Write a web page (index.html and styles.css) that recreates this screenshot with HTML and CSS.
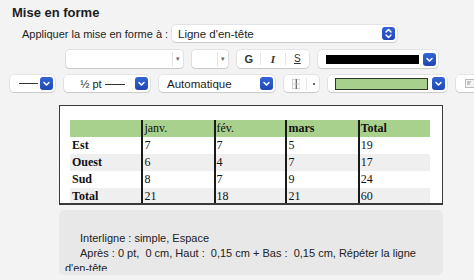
FILE: index.html
```html
<!DOCTYPE html>
<html lang="fr">
<head>
    <meta charset="UTF-8" />
    <title>Mise en forme</title>
    <link rel="stylesheet" href="styles.css">
</head>
<body>
    <div class="panel">
        <h2 class="title">Mise en forme</h2>

        <div class="row row-apply">
            <span class="label">Appliquer la mise en forme à :</span>
            <div class="popup popup-apply">
                <span class="popup-text">Ligne d'en-tête</span>
                <span class="blue-btn">
                    <svg width="9" height="11" viewBox="0 0 9 11"><path d="M2 4 L4.5 1.5 L7 4 M2 7 L4.5 9.5 L7 7" fill="none" stroke="#fff" stroke-width="1.5" stroke-linecap="round" stroke-linejoin="round"/></svg>
                </span>
            </div>
        </div>

        <div class="row row-font">
            <div class="combo combo-font"><span class="combo-arrow">▾</span></div>
            <div class="combo combo-size"><span class="combo-arrow">▾</span></div>
            <div class="segmented">
                <span class="seg seg-bold">G</span>
                <span class="seg seg-italic">I</span>
                <span class="seg seg-under">S</span>
            </div>
            <div class="popup popup-color">
                <span class="swatch swatch-black"></span>
                <span class="blue-btn"><svg width="9" height="9" viewBox="0 0 9 9"><path d="M2 3.5 L4.5 6 L7 3.5" fill="none" stroke="#fff" stroke-width="1.5" stroke-linecap="round" stroke-linejoin="round"/></svg></span>
            </div>
        </div>

        <div class="row row-border">
            <div class="popup popup-line">
                <span class="line-sample"></span>
                <span class="blue-btn"><svg width="9" height="9" viewBox="0 0 9 9"><path d="M2 3.5 L4.5 6 L7 3.5" fill="none" stroke="#fff" stroke-width="1.5" stroke-linecap="round" stroke-linejoin="round"/></svg></span>
            </div>
            <div class="popup popup-weight">
                <span class="popup-text centered">½ pt <span class="line-sample short"></span></span>
                <span class="blue-btn"><svg width="9" height="9" viewBox="0 0 9 9"><path d="M2 3.5 L4.5 6 L7 3.5" fill="none" stroke="#fff" stroke-width="1.5" stroke-linecap="round" stroke-linejoin="round"/></svg></span>
            </div>
            <div class="popup popup-auto">
                <span class="popup-text">Automatique</span>
                <span class="blue-btn"><svg width="9" height="9" viewBox="0 0 9 9"><path d="M2 3.5 L4.5 6 L7 3.5" fill="none" stroke="#fff" stroke-width="1.5" stroke-linecap="round" stroke-linejoin="round"/></svg></span>
            </div>
            <div class="popup popup-edges">
                <svg width="10" height="12" viewBox="0 0 10 12"><rect x="0.5" y="0.5" width="9" height="11" fill="none" stroke="#c8c8c8"/><line x1="5" y1="0.5" x2="5" y2="11.5" stroke="#333" stroke-width="1.2"/><line x1="0.5" y1="6" x2="9.5" y2="6" stroke="#c8c8c8"/></svg>
                <span class="edge-sep"></span>
                <span class="dot"></span>
            </div>
            <div class="popup popup-fill">
                <span class="swatch swatch-green"></span>
                <span class="blue-btn"><svg width="9" height="9" viewBox="0 0 9 9"><path d="M2 3.5 L4.5 6 L7 3.5" fill="none" stroke="#fff" stroke-width="1.5" stroke-linecap="round" stroke-linejoin="round"/></svg></span>
            </div>
            <div class="popup popup-align">
                <svg width="11" height="9" viewBox="0 0 11 9"><rect x="0.5" y="0.5" width="10" height="8" fill="#f4f4f4" stroke="#bbb"/><line x1="2" y1="3" x2="6" y2="3" stroke="#999"/><line x1="2" y1="5" x2="5" y2="5" stroke="#999"/></svg>
            </div>
        </div>

        <div class="preview">
            <table class="sample">
                <tr class="head">
                    <td></td><td>janv.</td><td>fév.</td><td class="strong">mars</td><td class="strong">Total</td>
                </tr>
                <tr>
                    <td class="strong">Est</td><td>7</td><td>7</td><td>5</td><td>19</td>
                </tr>
                <tr class="shade">
                    <td class="strong">Ouest</td><td>6</td><td>4</td><td>7</td><td>17</td>
                </tr>
                <tr>
                    <td class="strong">Sud</td><td>8</td><td>7</td><td>9</td><td>24</td>
                </tr>
                <tr class="shade">
                    <td class="strong">Total</td><td>21</td><td>18</td><td>21</td><td>60</td>
                </tr>
            </table>
        </div>

        <div class="summary">
            <div class="summary-text">
                <div class="summary-line">Interligne : simple, Espace</div>
                <div class="summary-line">Après : 0 pt,&nbsp; 0 cm, Haut :&nbsp; 0,15 cm + Bas :&nbsp; 0,15 cm, Répéter la ligne d'en-tête</div>
            </div>
        </div>
    </div>
</body>
</html>
```

FILE: styles.css
```css
body {
    margin: 0;
    background: #f3f3f3;
    font-family: "Liberation Sans", Arial, sans-serif;
    color: #1d1d1d;
    overflow: hidden;
}
.panel {
    width: 474px;
    height: 280px;
    overflow: hidden;
}
.title {
    margin: 0;
    padding: 6px 0 0 12px;
    font-size: 13px;
    font-weight: bold;
    line-height: 13px;
}
.row {
    display: flex;
    align-items: center;
    gap: 9px;
    white-space: nowrap;
}
.row-apply {
    margin: 6px 0 0 22px;
    gap: 0;
}
.label {
    font-size: 11px;
    width: 150px;
}
.popup {
    display: flex;
    align-items: center;
    box-sizing: border-box;
    height: 17px;
    background: #fff;
    border-radius: 4px;
    box-shadow: 0 0 0 0.5px rgba(0,0,0,0.12), 0 1px 1px rgba(0,0,0,0.12);
    padding: 0 2px 0 6px;
    font-size: 11px;
    flex-shrink: 0;
}
.popup-text {
    flex: 1;
}
.popup-text.centered {
    text-align: center;
}
.blue-btn {
    display: flex;
    align-items: center;
    justify-content: center;
    width: 13px;
    height: 13px;
    border-radius: 3px;
    background: linear-gradient(#3564d6, #2048b4);
    flex-shrink: 0;
}
.popup-apply {
    width: 225px;
    font-size: 11.5px;
}
.row-font {
    margin: 8px 0 0 66px;
}
.combo {
    position: relative;
    box-sizing: border-box;
    height: 18px;
    background: #fff;
    border-radius: 3px;
    box-shadow: 0 0 0 0.5px rgba(0,0,0,0.15), 0 1px 1px rgba(0,0,0,0.1);
    flex-shrink: 0;
}
.combo-arrow {
    position: absolute;
    right: 0;
    top: 2px;
    bottom: 2px;
    width: 10px;
    border-left: 1px solid #e2e2e2;
    font-size: 7px;
    color: #666;
    display: flex;
    align-items: center;
    justify-content: center;
}
.combo-font {
    width: 117px;
}
.combo-size {
    width: 36px;
}
.segmented {
    display: flex;
    height: 18px;
    width: 72px;
    background: #fff;
    border-radius: 4px;
    box-shadow: 0 0 0 0.5px rgba(0,0,0,0.12), 0 1px 1px rgba(0,0,0,0.12);
    align-items: center;
    flex-shrink: 0;
}
.seg {
    flex: 1;
    text-align: center;
    font-size: 11px;
    color: #333;
    line-height: 12px;
}
.seg + .seg {
    border-left: 1px solid #e4e4e4;
}
.seg-bold {
    font-weight: bold;
}
.seg-italic {
    font-family: "Liberation Serif", serif;
    font-style: italic;
    font-weight: bold;
}
.seg-under {
    text-decoration: underline;
    font-size: 10px;
}
.popup-color {
    width: 120px;
    height: 18px;
    padding: 0 2px 0 8px;
    gap: 4px;
}
.swatch {
    flex: 1;
    height: 9px;
}
.swatch-black {
    background: #000;
}
.row-border {
    margin: 7px 0 0 10px;
}
.popup-line {
    width: 45px;
    padding-left: 9px;
    gap: 2px;
}
.line-sample {
    display: inline-block;
    width: 22px;
    height: 1px;
    background: #333;
    vertical-align: middle;
}
.line-sample.short {
    width: 20px;
}
.popup-weight {
    width: 86px;
}
.popup-auto {
    width: 116px;
    padding-left: 8px;
    font-size: 11.5px;
}
.popup-edges {
    width: 35px;
    padding: 0 4px 0 8px;
    gap: 6px;
}
.edge-sep {
    width: 1px;
    height: 12px;
    background: #e4e4e4;
}
.dot {
    width: 2px;
    height: 2px;
    background: #333;
    border-radius: 1px;
}
.popup-fill {
    width: 119px;
    padding: 0 2px 0 7px;
    gap: 4px;
}
.swatch-green {
    height: 10px;
    background: #a6d08b;
    border: 1px solid #333;
}
.popup-align {
    width: 30px;
    padding-left: 9px;
}
.preview {
    box-sizing: border-box;
    margin: 13px 0 0 59px;
    width: 384px;
    height: 100px;
    background: #fff;
    border: 1px solid #3a3a3a;
    border-bottom-width: 2px;
    padding: 14px 0 0 10px;
    overflow: hidden;
}
.sample {
    border-collapse: collapse;
    width: 360px;
    font-family: "Liberation Serif", serif;
    font-size: 12px;
    color: #111;
}
.sample td {
    height: 17px;
    padding: 0 0 0 2px;
    width: 71px;
}
.sample td + td {
    border-left: 2px solid #1a1a1a;
    padding-left: 1px;
}
.head td {
    background: #a8d18e;
}
.shade td {
    background: #efefef;
}
.strong {
    font-weight: bold;
}
.summary {
    box-sizing: border-box;
    margin: 5px 0 0 59px;
    width: 384px;
    height: 65px;
    background: #e8e8e8;
    border-radius: 5px;
    padding: 21px 6px 0 6px;
    font-size: 11px;
    line-height: 15px;
    color: #222;
}
.summary-text {
    height: 40px;
    overflow: hidden;
}
.summary-line {
    text-indent: 15px;
}
```
